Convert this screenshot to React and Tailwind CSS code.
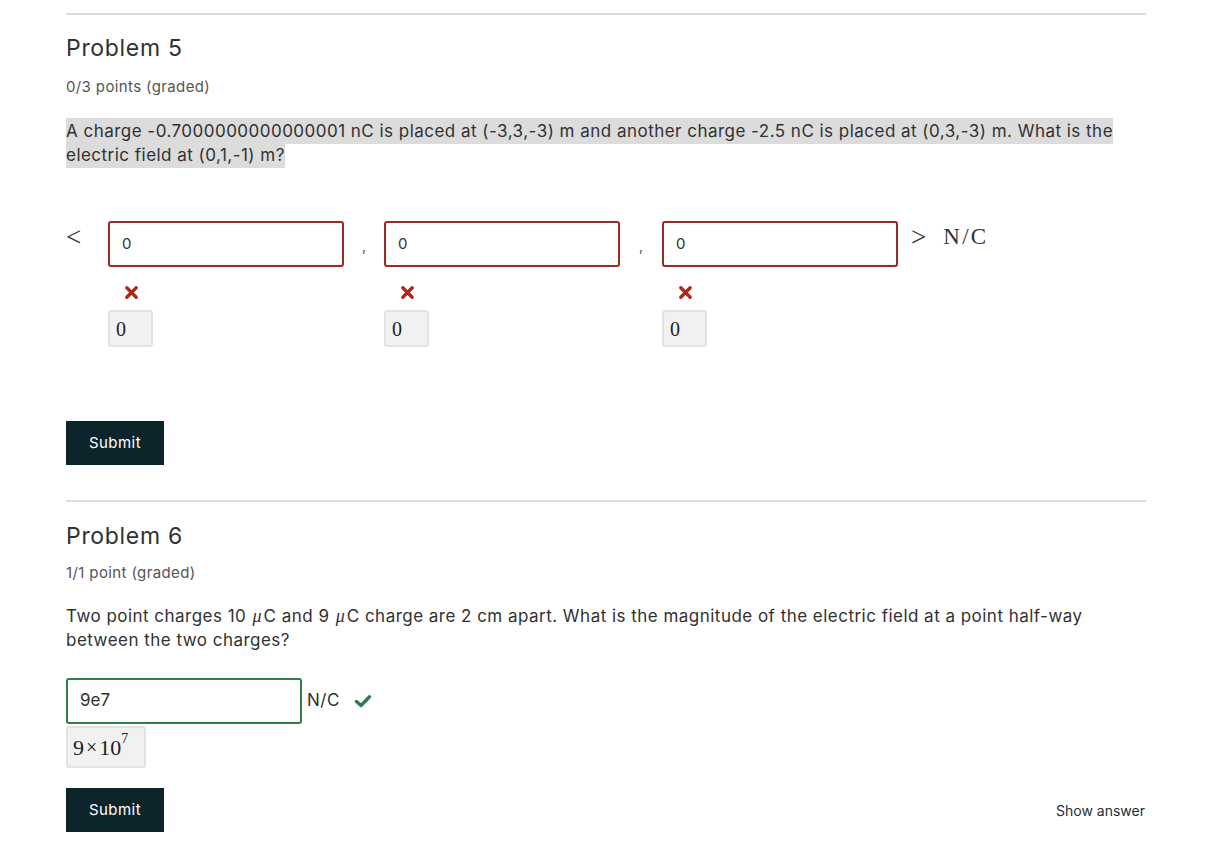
const sans = { fontFamily: 'Inter, "Noto Sans", sans-serif' }
const serif = 'font-["Liberation_Serif","DejaVu_Serif",serif]'

const Cross = () => (
  <svg width="15" height="15" viewBox="0 0 16 16" className="text-[#b0271c]">
    <path
      d="M3 3 L13 13 M13 3 L3 13"
      stroke="currentColor"
      strokeWidth="3.6"
      strokeLinecap="round"
    />
  </svg>
)

const Check = () => (
  <svg width="18" height="14" viewBox="0 0 18 14" className="text-[#2e7d4f]">
    <path
      d="M2.5 7.5 L7 11.5 L15.5 2.8"
      stroke="currentColor"
      strokeWidth="3.4"
      strokeLinecap="round"
      strokeLinejoin="round"
      fill="none"
    />
  </svg>
)

const Mu = () => (
  <span className={`italic ${serif} inline-block pl-[1px] pr-[2px] text-[18px] tracking-normal`}>
    μ
  </span>
)

const VectorInput = ({ value }) => (
  <div className="flex w-[236px] flex-col">
    <div className="flex h-[46px] items-center rounded-[3px] border-2 border-[#9d2a1e] bg-white px-3 text-[15px] text-[#313131]">
      {value}
    </div>
    <div className="mt-[18px] pl-[16px]">
      <Cross />
    </div>
    <div
      className={`mt-[10px] flex h-[37px] w-[45px] items-center rounded-[3px] border-2 border-[#e3e3e3] bg-[#f1f1f1] pl-[6px] text-[20px] text-[#222] ${serif}`}
    >
      0
    </div>
  </div>
)

const SubmitButton = () => (
  <button
    type="button"
    className="h-[44px] w-[98px] bg-[#0e242b] text-[15px] font-normal tracking-[0.03em] text-white"
  >
    Submit
  </button>
)

export default function App() {
  return (
    <div className="min-h-[855px] bg-white text-[#313131]" style={sans}>
      <div className="ml-[66px] w-[1080px] pt-[13px]">
        <section className="border-t-2 border-[#dddddd]">
          <h2 className="mt-[20px] text-[23px] leading-[26px] font-normal tracking-[0.03em]">
            Problem 5
          </h2>
          <p className="mt-[16px] text-[15px] leading-[20px] tracking-[0.025em] text-[#555]">
            0/3 points (graded)
          </p>
          <p className="mt-[22px] text-[17px] leading-[24px] tracking-[0.028em]">
            <span className="bg-[#dcdcdc] py-[3px]">
              A charge -0.7000000000000001 nC is placed at (-3,3,-3) m and
              another charge -2.5 nC is placed at (0,3,-3) m. What is the
              electric field at (0,1,-1) m?
            </span>
          </p>

          <div className="mt-[54px] flex items-start">
            <span
              className={`mt-[3px] w-[42px] text-[27px] leading-[26px] text-[#333] ${serif}`}
            >
              &lt;
            </span>
            <VectorInput value="0" />
            <span className="mt-[14px] w-[40px] text-center text-[14px] text-[#555]">
              ,
            </span>
            <VectorInput value="0" />
            <span className="mt-[14px] w-[42px] text-center text-[14px] text-[#555]">
              ,
            </span>
            <VectorInput value="0" />
            <span
              className={`mt-[3px] ml-[13px] text-[27px] leading-[26px] text-[#333] ${serif}`}
            >
              &gt;
            </span>
            <span
              className={`mt-[4px] ml-[17px] text-[23px] leading-[24px] tracking-[0.1em] text-[#333] ${serif}`}
            >
              N/C
            </span>
          </div>

          <div className="mt-[74px] pb-[35px]">
            <SubmitButton />
          </div>
        </section>

        <section className="border-t-2 border-[#dddddd]">
          <h2 className="mt-[21px] text-[23px] leading-[26px] font-normal tracking-[0.03em]">
            Problem 6
          </h2>
          <p className="mt-[14px] text-[15px] leading-[20px] tracking-[0.025em] text-[#555]">
            1/1 point (graded)
          </p>
          <p className="mt-[21px] text-[17px] leading-[24px] tracking-[0.028em]">
            Two point charges 10 <Mu />C and 9 <Mu />C charge are 2 cm apart.
            What is the magnitude of the electric field at a point half-way
            between the two charges?
          </p>

          <div className="mt-[26px] flex items-center">
            <div className="flex h-[46px] w-[236px] items-center rounded-[3px] border-2 border-[#2e7d4f] bg-white px-3 text-[17px]">
              9e7
            </div>
            <span className="ml-[5px] text-[17px] tracking-[0.03em]">N/C</span>
            <span className="ml-[14px] flex">
              <Check />
            </span>
          </div>
          <div
            className={`mt-[2px] flex h-[42px] w-[80px] items-center rounded-[3px] border-2 border-[#e3e3e3] bg-[#f1f1f1] pl-[5px] text-[22px] text-[#222] ${serif}`}
          >
            9<span className="mx-[2px] text-[20px]">×</span>10
            <sup className="-top-[0.6em] text-[14px]">7</sup>
          </div>

          <div className="mt-[20px] flex items-center justify-between">
            <SubmitButton />
            <button
              type="button"
              className="mr-[1px] text-[14px] font-normal text-[#1c2f36]"
            >
              Show answer
            </button>
          </div>
        </section>
      </div>
    </div>
  )
}
